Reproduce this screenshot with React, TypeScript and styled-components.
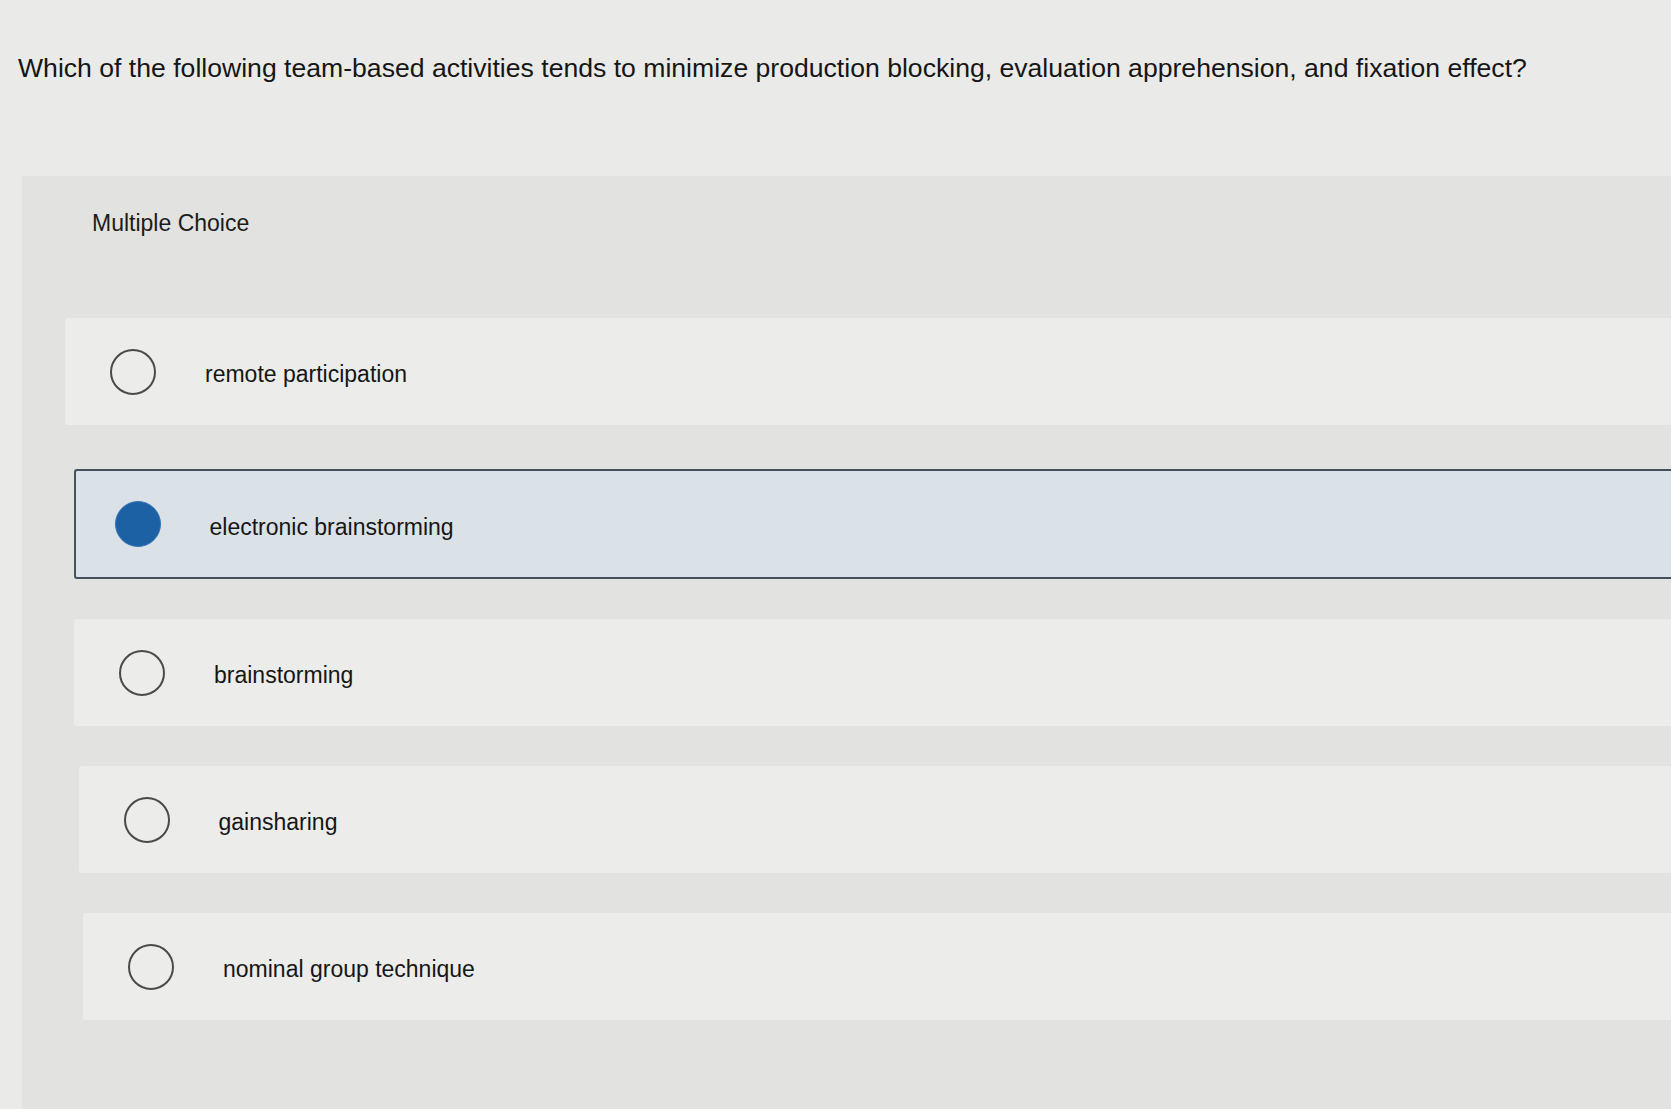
import React from 'react';
import styled, { createGlobalStyle } from 'styled-components';

const GlobalStyle = createGlobalStyle`
    html, body {
        margin: 0;
        padding: 0;
        height: 100%;
        overflow: hidden;
    }

    body {
        background: #eaeae8;
        font-family: "Liberation Sans", Arial, sans-serif;
        color: #1a1a1a;
    }
`

const Page = styled.div`
    display: flex;
    flex-direction: column;
    height: 1109px;
`

const Question = styled.h1`
    margin: 0;
    padding: 52px 0 0 18px;
    font-size: 26.6px;
    font-weight: 400;
    line-height: 32px;
    color: #161616;
    white-space: nowrap;
`

const Panel = styled.section`
    flex: 1;
    display: flex;
    flex-direction: column;
    margin: 92px 0 0 22px;
    background: #e2e2e0;
    min-width: 1700px;
`

const Heading = styled.h2`
    margin: 0;
    padding: 33px 0 0 70px;
    font-size: 23px;
    font-weight: 400;
    line-height: 28px;
    color: #1c1c1c;
`

const Options = styled.div`
    display: flex;
    flex-direction: column;
    gap: 40px;
    margin-top: 81px;
`

const Option = styled.label<{ $shift: number; $selected?: boolean }>`
    box-sizing: border-box;
    display: flex;
    align-items: center;
    height: ${p => (p.$selected ? 110 : 107)}px;
    margin-top: ${p => (p.$selected ? 4 : 0)}px;
    margin-left: ${p => 43 + p.$shift + (p.$selected ? 4 : 0)}px;
    padding-left: ${p => (p.$selected ? 39 : 45)}px;
    background: ${p => (p.$selected ? '#dae2e7' : '#ececea')};
    border: ${p => (p.$selected ? '2px solid #45525e' : 'none')};
    border-right: none;
    border-radius: 3px 0 0 3px;
    cursor: pointer;
`

const Radio = styled.span<{ $checked?: boolean }>`
    box-sizing: border-box;
    flex: none;
    width: 46px;
    height: 46px;
    border-radius: 50%;
    border: ${p => (p.$checked ? '1px solid #3574b2' : '2px solid #4a4a4a')};
    background: ${p => (p.$checked ? '#1d61a5' : 'transparent')};
`

const OptionText = styled.span`
    margin-left: 49px;
    margin-top: 5px;
    font-size: 23px;
    line-height: 28px;
    color: #161616;
`

const choices = [
    'remote participation',
    'electronic brainstorming',
    'brainstorming',
    'gainsharing',
    'nominal group technique',
]

const selected = 1

const App = () => {
    return (
        <Page>
            <GlobalStyle />
            <Question>
                Which of the following team-based activities tends to minimize production blocking, evaluation apprehension, and fixation effect?
            </Question>

            <Panel>
                <Heading>Multiple Choice</Heading>

                <Options>
                    {choices.map((choice, i) => (
                        <Option key={choice} $shift={i * 4.5} $selected={i === selected}>
                            <Radio $checked={i === selected} />
                            <OptionText>{choice}</OptionText>
                        </Option>
                    ))}
                </Options>
            </Panel>
        </Page>
    )
}

export default App;
